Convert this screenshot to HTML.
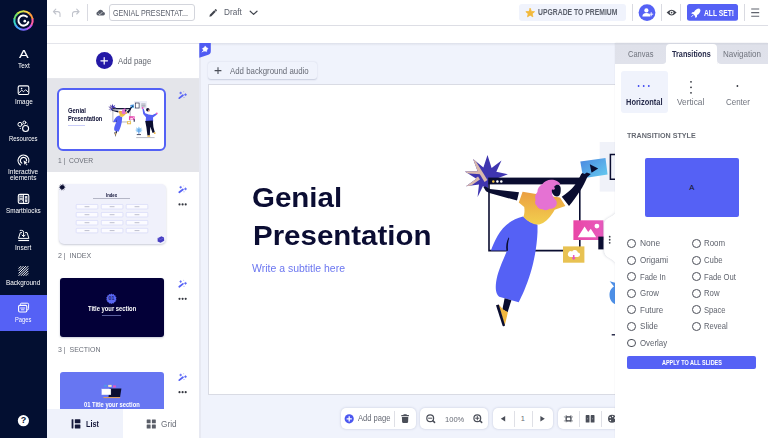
<!DOCTYPE html>
<html><head><meta charset="utf-8"><title>Genial Presentation</title>
<style>
*{box-sizing:border-box;margin:0;padding:0}
html,body{width:768px;height:438px;overflow:hidden;background:#fff;font-family:"Liberation Sans",sans-serif;color:#5a5f6b}
.abs,.t{position:absolute}
.t{white-space:pre;line-height:1}
svg{position:absolute;left:0;top:0;overflow:visible}
#side{position:absolute;left:0;top:0;width:47px;height:438px;background:#030f31}
#top{position:absolute;left:47px;top:0;width:721px;height:26px;background:#fff;border-bottom:1px solid #dddee5}
#pages{position:absolute;left:47px;top:44px;width:152.3px;height:394px;background:#fff;overflow:hidden}
#cv{position:absolute;left:199px;top:43px;width:569px;height:395px;background:#f0f3fc;overflow:hidden}
#rp{position:absolute;left:615.400px;top:43px;width:153px;height:395px;background:#fff;box-shadow:-0.5px 0 1.500px rgba(40,50,90,.16)}
.grp{position:absolute;top:408px;height:21px;background:#fff;border-radius:5px;box-shadow:0 0 2.5px rgba(60,70,120,.25)}
.rad{position:absolute;width:8.8px;height:8.8px;border:1.4px solid #4b4e58;border-radius:50%}
.vd{position:absolute;width:1px;background:#d9dae1}
</style></head><body>
<div id="top"></div>
<svg width="768" height="438" viewBox="0 0 768 438" fill="none" stroke-linecap="round" stroke-linejoin="round">
<path d="M53.6 11.6h4.2a2.2 2.2 0 0 1 2.2 2.2v2.6M55.8 9.2l-2.4 2.4 2.4 2.4" stroke="#c1c4cc" stroke-width="1.1"/>
<path d="M78.9 11.6h-4.2a2.2 2.2 0 0 0 -2.2 2.2v2.6M76.7 9.2l2.4 2.4-2.4 2.4" stroke="#c1c4cc" stroke-width="1.1"/>
<g transform="translate(100.4 12.8) scale(0.84) translate(-100.6 -12.4)"><path d="M97.6 15.6h6.2a2.1 2.1 0 0 0 0.3-4.2a3.4 3.4 0 0 0 -6.4-0.6a2.5 2.5 0 0 0 -0.1 4.8z" fill="#5a5f6b"/><path d="M98.6 13.4l1.4 1.3 2.6-2.8" stroke="#fff" stroke-width="0.8"/></g>
<g transform="translate(212.8 13) scale(0.84) translate(-213.4 -11.8)">
<path d="M209.3 16.2l0.6-2.4 5.2-5.2 1.8 1.8-5.2 5.2z" fill="#40444d"/><path d="M215.6 8.1l0.7-0.7a0.7 0.7 0 0 1 1 0l0.8 0.8a0.7 0.7 0 0 1 0 1l-0.7 0.7z" fill="#40444d"/>
</g>
<path d="M250.2 11.2l3.4 3.2 3.4-3.2" stroke="#40444d" stroke-width="1.2"/>
</svg>
<div class="vd" style="left:87px;top:4px;height:17px"></div>
<div class="abs" style="left:109px;top:4px;width:85.5px;height:16.6px;border:1px solid #d3d5dc;border-radius:3px"></div>
<span class="t" style="left:113.33px;top:8.62px;font-size:8.6px;font-weight:400;color:#5a5f6b;transform:scaleX(0.8317);transform-origin:0 0;">GENIAL PRESENTAT...</span>
<span class="t" style="left:224.42px;top:8.45px;font-size:8.8px;font-weight:400;color:#5a5f6b;transform:scaleX(0.9313);transform-origin:0 0;">Draft</span>
<div class="abs" style="left:519.4px;top:4px;width:106.8px;height:16.8px;background:#f0f3fc;border-radius:3px"></div>
<svg width="768" height="438" viewBox="0 0 768 438" fill="none" stroke-linecap="round" stroke-linejoin="round">
<polygon points="530.20,8.50 531.43,11.40 534.57,11.68 532.20,13.75 532.90,16.82 530.20,15.20 527.50,16.82 528.20,13.75 525.83,11.68 528.97,11.40" fill="#f2b93b" stroke="#f2b93b" stroke-width="0.8"/>
<circle cx="647" cy="12.6" r="8.4" fill="#5561f5"/>
<circle cx="646.4" cy="10.4" r="2.1" fill="#fff"/><path d="M642.4 16.6a4 3.6 0 0 1 8 0z" fill="#fff"/><path d="M651.2 12.6v3.2M649.6 14.2h3.2" stroke="#fff" stroke-width="0.9"/>
<path d="M666.6 12.6q5-5.6 10 0q-5 5.6-10 0z" fill="#40444d"/><circle cx="671.6" cy="12.6" r="1.9" fill="#fff"/><circle cx="671.6" cy="12.6" r="0.9" fill="#40444d"/>
<rect x="687" y="4" width="51" height="16.8" rx="2.5" fill="#5561f5"/>
<path d="M699.6 8.4c-2.2 0.1-4 1.4-5.2 3.4l-1.8 0.2-1 1.4 1.9 0.5 1.9 1.9 0.5 1.9 1.4-1 0.2-1.8c2-1.2 3.300-3 3.400-5.200z" fill="#fff" transform="translate(-0.4 0.2)"/><path d="M693 15.200l-1.300 1.300" stroke="#fff" stroke-width="0.9"/>
<path d="M751.2 9h8M751.2 12.600h8M751.2 16.200h8" stroke="#5f636d" stroke-width="1.150" stroke-linecap="butt"/>
</svg>
<span class="t" style="left:538.45px;top:8.96px;font-size:8.2px;font-weight:700;color:#5a5f6b;transform:scaleX(0.8334);transform-origin:0 0;">UPGRADE TO PREMIUM</span>
<span class="t" style="left:703.74px;top:8.79px;font-size:8.4px;font-weight:700;color:#fff;transform:scaleX(0.8023);transform-origin:0 0;">ALL SET!</span>
<div class="vd" style="left:632px;top:4px;height:17px"></div>
<div class="vd" style="left:661.1px;top:4px;height:17px"></div>
<div class="vd" style="left:680.4px;top:4px;height:17px"></div>
<div class="vd" style="left:743.7px;top:4px;height:17px"></div>
<div class="abs" style="left:47px;top:43px;width:721px;height:1px;background:#e4e5eb"></div>
<div id="cv"></div>
<div class="abs" style="left:200px;top:43px;width:568px;height:3px;background:linear-gradient(#dde0ea,#f0f3fc)"></div>
<div class="abs" style="left:199.300px;top:44px;width:1.400px;height:394px;background:#e7e9f2"></div>
<div class="abs" style="left:208px;top:84px;width:552px;height:310.5px;background:#fff;border:1px solid #d9dbe4"></div>
<div class="abs" style="left:208px;top:61.600px;width:109.400px;height:17.600px;background:#f0f3fc;border-radius:3px;box-shadow:0 0.5px 1.5px rgba(40,50,100,.20)"></div>
<svg width="768" height="438" viewBox="0 0 768 438" fill="none"><path d="M214.600 70.600h6.800M218 67.200v6.800" stroke="#4a4e58" stroke-width="1.100"/><path d="M199.300 43h11.500v8.200c0 2.200-1.200 3.300-3.200 3.900L199.300 57.700z" fill="#4f5bf3"/><path d="M205.200 45.900L206.400 47.600L208.100 48.400L206.900 49.900L206.600 51.800L205 51.100L203.500 51.600L203.400 50L202.300 48.600L203.900 47.800Z" fill="#fff" stroke="#fff" stroke-width="0.400" stroke-linejoin="round"/><path d="M203.400 50.700l-1.300 1.300" stroke="#fff" stroke-width="0.900" stroke-linecap="round"/></svg>
<span class="t" style="left:230.34px;top:67.19px;font-size:8.4px;font-weight:400;color:#666a75;transform:scaleX(0.9379);transform-origin:0 0;">Add background audio</span>
<span class="t" style="left:252.17px;top:183.97px;font-size:27.8px;font-weight:700;color:#0b0d33;transform:scaleX(1.0611);transform-origin:0 0;">Genial</span>
<span class="t" style="left:252.67px;top:222.27px;font-size:27.8px;font-weight:700;color:#0b0d33;transform:scaleX(1.0599);transform-origin:0 0;">Presentation</span>
<span class="t" style="left:252.31px;top:263.16px;font-size:10.8px;font-weight:400;color:#6b76f0;transform:scaleX(0.9704);transform-origin:0 0;">Write a subtitle here</span>
<svg width="768" height="438" viewBox="0 0 768 438" fill="none">
<defs><linearGradient id="gT" x1="0" y1="0" x2="0" y2="1"><stop offset="0" stop-color="#eb9f42"/><stop offset="1" stop-color="#f2cf4e"/></linearGradient><linearGradient id="gB" x1="0" y1="0" x2="1" y2="1"><stop offset="0" stop-color="#4a86e0"/><stop offset="1" stop-color="#66cdf0"/></linearGradient><linearGradient id="gP" x1="0" y1="0" x2="1" y2="0"><stop offset="0" stop-color="#e946a6"/><stop offset="1" stop-color="#e85abd"/></linearGradient><clipPath id="cStar"><path id="starp" d="M487.500 154.900L491.600 168L501.500 160.500L496.300 171.800L507.900 174.200L497 178.500L500 186L490 184.500L487 190L483 186L477.600 196.900L479 184.400L466 186.200L476.400 178.800L464.800 171.400L477.600 171.200L473.100 159L483.400 167.400Z"/></clipPath></defs>
<rect x="599.700" y="142" width="20" height="49.600" fill="#f0f2f9"/>
<path d="M616 154.600h-5.600v24.600h5.600" stroke="#0a0d30" stroke-width="1.500"/>
<path d="M487.500 154.900L491.600 168L501.500 160.500L496.300 171.800L507.900 174.200L497 178.500L500 186L490 184.500L487 190L483 186L477.600 196.900L479 184.400L466 186.200L476.400 178.800L464.800 171.400L477.600 171.200L473.100 159L483.400 167.400Z" fill="#3f35b0"/>
<g clip-path="url(#cStar)" stroke="#d9b8ac" stroke-width="3.400"><path d="M470 155L486 181"/><path d="M462 171.500L481 172.500"/><path d="M463 189L479 178"/></g>
<rect x="488.200" y="184" width="92" height="66.600" fill="#fff"/>
<rect x="488.200" y="177.600" width="93" height="6.800" fill="#0a0d30"/>
<path d="M489 184v66.600h75" stroke="#0a0d30" stroke-width="1.600"/><path d="M579.800 184v64" stroke="#0a0d30" stroke-width="1.600"/>
<circle cx="493.300" cy="181.500" r="1.250" fill="#f2c43d"/><circle cx="497.400" cy="181.500" r="1.250" fill="#fff"/><circle cx="501.300" cy="181.500" r="1.250" fill="#fff"/>
<path d="M580.300 161.500L605.500 158L607.600 174.600L583.200 178.200Z" fill="url(#gB)"/>
<path d="M589.800 164.300L598.200 168.500L591.500 172.700Z" fill="#0a0d30"/>
<path d="M523 216.500C512 219 503 226 497.500 236C494 242.500 492 247 491 250.600L507 250.600C505 256 500 266 497.300 276C495.500 283 495.200 290 496.800 293.500C497.800 296 499 296.800 500 297L518.700 302.200C522 296 526.500 286 530.500 273C534.500 260 537 245 537.500 232L537.500 224.500L530 222Z" fill="#5561f5"/>
<path d="M508.600 237.500C506.500 241.500 505.800 246 506.400 250.800L508 250.800C507.600 246 508 242 509.200 238Z" fill="#0a0d30"/>
<path d="M504.600 298.300L511.400 300.200L507.600 312.200L502.400 309.600Z" fill="#0a0d30"/>
<path d="M498.600 304.600L503.200 309.400L507.800 312.200C507 316.500 505.800 321.500 504.600 325.600Z" fill="#f0b73f"/>
<path d="M496 305.200L498.800 304.400L505 325.200C504.600 326.400 503.400 326.800 502.600 325.800Z" fill="#0a0d30"/>
<path d="M483.400 187L485.400 186.600L489.800 188.900L519 192.200L517 200.600L489.500 192.900L486 191.200Z" fill="#0a0d30"/>
<path d="M561.800 196.800C567 193.500 571.500 189.500 574.500 185.600C577.500 181.500 579.500 177.500 581.200 174L582.400 172.900L584.600 173.900L586.800 172.400L590.800 174.100L587.200 177.200C585.500 181.500 583 186.500 579.800 191.200C576.500 196 573 201.500 569 206Z" fill="#0a0d30"/>
<path d="M522.600 191.800L542 195L560 197.400L565.400 206L554.700 209.700C553.600 212 552.400 213.500 550.600 216C547.500 220 542.500 224.800 537 224.600C531 223.500 526 220 523.400 216.700C524.600 213.500 524.800 210.500 524.200 206.900L518.800 202.400Z" fill="url(#gT)"/>
<path d="M551 179.800C555 179.600 559 181.500 560.600 184.600C557 184 553 187 552 191C551.500 195 554 198.500 556.200 200.500C557.400 203 556.800 206 554.600 207.400C552.500 209 550.500 208.400 549.500 208.800C547.500 210.600 544.500 210.600 542.600 209.200C540 209.600 537.600 208 537 206C535 204.600 534.600 202 535.600 200C534.400 197 535.400 194 537.400 192C537.400 188.500 539.500 185.500 542.400 184C544.400 181.400 547.500 179.800 551 179.800Z" fill="#e572d3"/>
<path d="M554.400 186.400C555.800 184.400 558.600 184.200 560 186C561 187.600 560.800 190 560.600 192C560.400 194.600 559 196.600 556.800 196.600C554 196.400 551.800 193.500 551.800 190.800C551.800 189 552.800 187.400 554.400 186.400Z" fill="#0a0d30"/>
<circle cx="553.300" cy="188.200" r="1.500" fill="#e572d3"/>
<rect x="573.400" y="220.300" width="30" height="19.700" fill="url(#gP)"/>
<path d="M577.800 237.200L584.600 226.600L588.200 232L590.800 228.800L596.200 237.200Z" fill="#fff"/><circle cx="596.900" cy="226.100" r="2.400" fill="#fff"/>
<rect x="598.300" y="236.600" width="5.200" height="12.800" fill="#0a0d30"/>
<rect x="563" y="246.400" width="21.400" height="16.300" fill="#e8c252"/>
<path d="M569.800 257h7.800a2.300 2.300 0 0 0 0.300-4.600a3.200 3.200 0 0 0 -5.800-1a2.800 2.800 0 0 0 -2.300 5.600z" fill="#fff"/>
<path d="M573.700 255v3.400M572.400 257.400l1.300 1.500 1.300-1.500" stroke="#e957c0" stroke-width="1.500"/>
<path d="M609.700 281.200L616 283L616 304.500C611 303 609 298 609.600 293C610 290 612 287.500 614 286.500Z" fill="#4d8fe6"/>
<path d="M611.700 334.800h5" stroke="#0a0d30" stroke-width="1.300"/>
</svg>
<div class="grp" style="left:340.6px;width:75.2px"></div>
<div class="grp" style="left:420px;width:68.2px"></div>
<div class="grp" style="left:493px;width:60.4px"></div>
<div class="grp" style="left:557.7px;width:70px"></div>
<div class="vd" style="left:394px;top:410.500px;height:16px;background:#dfe0e6"></div>
<div class="vd" style="left:514.2px;top:410.500px;height:16px;background:#dfe0e6"></div>
<div class="vd" style="left:531.5px;top:410.500px;height:16px;background:#dfe0e6"></div>
<div class="vd" style="left:579.2px;top:410.500px;height:16px;background:#dfe0e6"></div>
<div class="vd" style="left:601px;top:410.500px;height:16px;background:#dfe0e6"></div>
<svg width="768" height="438" viewBox="0 0 768 438" fill="none" stroke-linecap="round" stroke-linejoin="round">
<circle cx="349.200" cy="418.800" r="4.600" fill="#4b57f0"/><path d="M346.600 418.800h5.200M349.200 416.200v5.200" stroke="#fff" stroke-width="1.300" stroke-linecap="butt"/>
<path d="M401.300 416.300h7.600v-1.200h-2.200v-0.800h-3.200v0.800h-2.200z" fill="#4a4e58"/><path d="M401.900 417.100h6.400l-0.200 5a0.900 0.900 0 0 1 -0.900 0.800h-4.200a0.900 0.900 0 0 1 -0.900-0.800z" fill="#4a4e58"/>
<circle cx="430.2" cy="418.200" r="3.400" stroke="#4a4e58" stroke-width="1.200"/><path d="M432.9 420.7l1.700 1.700" stroke="#4a4e58" stroke-width="1.500"/>
<path d="M428.5 418.200h3.400" stroke="#4a4e58" stroke-width="1"/>
<circle cx="477.3" cy="418.200" r="3.400" stroke="#4a4e58" stroke-width="1.200"/><path d="M480.0 420.7l1.700 1.700" stroke="#4a4e58" stroke-width="1.500"/>
<path d="M475.6 418.200h3.400" stroke="#4a4e58" stroke-width="1"/>
<path d="M477.3 416.500v3.400" stroke="#4a4e58" stroke-width="1"/>
<path d="M505.200 416v5.600l-4.400-2.800z" fill="#4a4e58"/><path d="M540.400 416v5.600l4.400-2.800z" fill="#4a4e58"/>
<path d="M563.900 416.900h9.300M563.900 420.900h9.300M566.200 415v7.800M570.900 415v7.800" stroke="#4a4e58" stroke-width="0.900" stroke-linecap="butt" stroke-dasharray="0.900 0.700" opacity="0.800"/><rect x="566.200" y="416.900" width="4.700" height="4" fill="none" stroke="#4a4e58" stroke-width="1.200"/>
<rect x="585.700" y="415.100" width="3.800" height="7.400" rx="0.600" fill="#4a4e58"/><rect x="590.700" y="415.100" width="3.800" height="7.400" rx="0.600" fill="#4a4e58"/><circle cx="587.600" cy="418.800" r="0.550" fill="#9fa2ab"/><circle cx="592.600" cy="418.800" r="0.550" fill="#9fa2ab"/>
<circle cx="612" cy="418.700" r="4" fill="#4a4e58"/><circle cx="610.200" cy="417.600" r="0.750" fill="#fff"/><circle cx="612.600" cy="416.400" r="0.750" fill="#fff"/><circle cx="610.400" cy="420.400" r="0.750" fill="#fff"/><circle cx="614.600" cy="418" r="0.750" fill="#fff"/>
</svg>
<span class="t" style="left:357.55px;top:415.36px;font-size:8.2px;font-weight:400;color:#666a75;transform:scaleX(0.9270);transform-origin:0 0;">Add page</span>
<span class="t" style="left:444.59px;top:415.54px;font-size:7.4px;font-weight:400;color:#666a75;transform:scaleX(1.0216);transform-origin:0 0;">100%</span>
<span class="t" style="left:520.74px;top:415.14px;font-size:7.4px;font-weight:400;color:#666a75;">1</span>
<svg width="768" height="438" viewBox="0 0 768 438" style="filter:drop-shadow(-0.5px 0 1px rgba(40,50,90,.16))"><path d="M616 210.500C616 217.500 604.400 216.500 604.400 224.500V251C604.400 259 616 258 616 265.500z" fill="#fff"/></svg>
<div id="rp"></div>
<svg width="768" height="438" viewBox="0 0 768 438"><path d="M616 210.500C616 217.500 604.400 216.500 604.400 224.500V251C604.400 259 616 258 616 265.500z" fill="#fff"/><circle cx="609.700" cy="236.700" r="0.900" fill="#42464f"/><circle cx="609.700" cy="239.750" r="0.900" fill="#42464f"/><circle cx="609.700" cy="242.800" r="0.900" fill="#42464f"/></svg>
<div class="abs" style="left:615.400px;top:43px;width:153px;height:21px;background:linear-gradient(#d2d5df 0,#dfe1ea 2.500px,#e0e2eb 100%)"></div>
<div class="abs" style="left:666.300px;top:43.500px;width:51px;height:21px;background:#fff;border-radius:4px 4px 0 0"></div>
<svg width="768" height="438" viewBox="0 0 768 438"><path d="M662.300 64h4v-4a4 4 0 0 1 -4 4zM721.300 64h-4v-4a4 4 0 0 0 4 4z" fill="#fff"/></svg>
<span class="t" style="left:628.44px;top:50.19px;font-size:8.4px;font-weight:400;color:#70747e;transform:scaleX(0.8985);transform-origin:0 0;">Canvas</span>
<span class="t" style="left:672.44px;top:50.09px;font-size:8.4px;font-weight:700;color:#262a4a;transform:scaleX(0.8666);transform-origin:0 0;">Transitions</span>
<span class="t" style="left:723.44px;top:50.09px;font-size:8.4px;font-weight:400;color:#70747e;transform:scaleX(0.9582);transform-origin:0 0;">Navigation</span>
<div class="abs" style="left:621.300px;top:70.600px;width:46.700px;height:42px;background:#f0f3fc;border-radius:3px"></div>
<svg width="768" height="438" viewBox="0 0 768 438"><circle cx="638.600" cy="86" r="0.900" fill="#3b47f0"/><circle cx="643.700" cy="86" r="0.900" fill="#3b47f0"/><circle cx="648.800" cy="86" r="0.900" fill="#3b47f0"/><circle cx="691" cy="81.800" r="0.900" fill="#33363f"/><circle cx="691" cy="87.300" r="0.900" fill="#33363f"/><circle cx="691" cy="92.800" r="0.900" fill="#33363f"/><circle cx="737.400" cy="86" r="0.900" fill="#33363f"/></svg>
<span class="t" style="left:626.24px;top:97.79px;font-size:8.4px;font-weight:700;color:#262a4a;transform:scaleX(0.8918);transform-origin:0 0;">Horizontal</span>
<span class="t" style="left:677.34px;top:97.79px;font-size:8.4px;font-weight:400;color:#70747e;transform:scaleX(0.9947);transform-origin:0 0;">Vertical</span>
<span class="t" style="left:725.54px;top:97.79px;font-size:8.4px;font-weight:400;color:#70747e;transform:scaleX(0.9516);transform-origin:0 0;">Center</span>
<span class="t" style="left:626.87px;top:132.00px;font-size:7.8px;font-weight:700;color:#666a73;transform:scaleX(0.9173);transform-origin:0 0;">TRANSITION STYLE</span>
<div class="abs" style="left:645px;top:158.200px;width:94px;height:58.800px;background:#5561f5;border-radius:2px"></div>
<span class="t" style="left:689.16px;top:184.17px;font-size:7.6px;font-weight:400;color:#111;">A</span>
<div class="rad" style="left:627.00px;top:239.20px"></div>
<span class="t" style="left:639.74px;top:239.49px;font-size:8.4px;font-weight:400;color:#5f636d;transform:scaleX(1.0046);transform-origin:0 0;">None</span>
<div class="rad" style="left:691.90px;top:239.20px"></div>
<span class="t" style="left:704.24px;top:239.49px;font-size:8.4px;font-weight:400;color:#5f636d;transform:scaleX(0.9454);transform-origin:0 0;">Room</span>
<div class="rad" style="left:627.00px;top:255.75px"></div>
<span class="t" style="left:639.74px;top:256.04px;font-size:8.4px;font-weight:400;color:#5f636d;transform:scaleX(0.9589);transform-origin:0 0;">Origami</span>
<div class="rad" style="left:691.90px;top:255.75px"></div>
<span class="t" style="left:704.24px;top:256.04px;font-size:8.4px;font-weight:400;color:#5f636d;transform:scaleX(0.9248);transform-origin:0 0;">Cube</span>
<div class="rad" style="left:627.00px;top:272.30px"></div>
<span class="t" style="left:639.74px;top:272.59px;font-size:8.4px;font-weight:400;color:#5f636d;transform:scaleX(0.9056);transform-origin:0 0;">Fade In</span>
<div class="rad" style="left:691.90px;top:272.30px"></div>
<span class="t" style="left:704.24px;top:272.59px;font-size:8.4px;font-weight:400;color:#5f636d;transform:scaleX(0.9142);transform-origin:0 0;">Fade Out</span>
<div class="rad" style="left:627.00px;top:288.85px"></div>
<span class="t" style="left:639.74px;top:289.14px;font-size:8.4px;font-weight:400;color:#5f636d;transform:scaleX(0.9405);transform-origin:0 0;">Grow</span>
<div class="rad" style="left:691.90px;top:288.85px"></div>
<span class="t" style="left:704.24px;top:289.14px;font-size:8.4px;font-weight:400;color:#5f636d;transform:scaleX(0.9259);transform-origin:0 0;">Row</span>
<div class="rad" style="left:627.00px;top:305.40px"></div>
<span class="t" style="left:639.74px;top:305.69px;font-size:8.4px;font-weight:400;color:#5f636d;transform:scaleX(0.9548);transform-origin:0 0;">Future</span>
<div class="rad" style="left:691.90px;top:305.40px"></div>
<span class="t" style="left:704.24px;top:305.69px;font-size:8.4px;font-weight:400;color:#5f636d;transform:scaleX(0.9063);transform-origin:0 0;">Space</span>
<div class="rad" style="left:627.00px;top:321.95px"></div>
<span class="t" style="left:639.74px;top:322.24px;font-size:8.4px;font-weight:400;color:#5f636d;transform:scaleX(0.9624);transform-origin:0 0;">Slide</span>
<div class="rad" style="left:691.90px;top:321.95px"></div>
<span class="t" style="left:704.24px;top:322.24px;font-size:8.4px;font-weight:400;color:#5f636d;transform:scaleX(0.9097);transform-origin:0 0;">Reveal</span>
<div class="rad" style="left:627.00px;top:338.50px"></div>
<span class="t" style="left:639.74px;top:338.79px;font-size:8.4px;font-weight:400;color:#5f636d;transform:scaleX(0.9399);transform-origin:0 0;">Overlay</span>
<div class="abs" style="left:627.300px;top:356.200px;width:129.100px;height:12.800px;background:#5561f5;border-radius:2px"></div>
<span class="t" style="left:661.84px;top:359.70px;font-size:6.5px;font-weight:700;color:#fff;transform:scaleX(0.8433);transform-origin:0 0;">APPLY TO ALL SLIDES</span>
<div id="pages"></div>
<div class="abs" style="left:47px;top:78px;width:152.3px;height:1px;background:#e6e7ec"></div>
<div class="abs" style="left:47px;top:79px;width:152.3px;height:93.2px;background:#e4e5ea"></div>
<div class="abs" style="left:95.6px;top:52.2px;width:17.2px;height:17.2px;border-radius:50%;background:#2419a6"></div>
<svg width="768" height="438" viewBox="0 0 768 438" fill="none"><path d="M100.9 60.8h6.600M104.200 57.500v6.600" stroke="#fff" stroke-width="1.2" stroke-linecap="round"/></svg>
<span class="t" style="left:117.74px;top:57.09px;font-size:8.4px;font-weight:400;color:#62666f;transform:scaleX(0.9261);transform-origin:0 0;">Add page</span>
<div class="abs" style="left:57.1px;top:88.1px;width:109.4px;height:62.5px;background:#fff;border:2px solid #5361f5;border-radius:6px"></div>
<div class="abs" style="left:58.6px;top:183.6px;width:107.2px;height:60px;background:#f0f1fb;border-radius:5px;box-shadow:0 1px 2px rgba(40,50,100,.25)"></div>
<div class="abs" style="left:59.6px;top:278px;width:104.6px;height:59px;background:#030038;border-radius:3px;box-shadow:0 1px 2px rgba(40,50,100,.25)"></div>
<div class="abs" style="left:59.6px;top:372.300px;width:104.6px;height:59px;background:#6776f2;border-radius:3px"></div>
<span class="t" style="left:58.48px;top:157.48px;font-size:7.7px;font-weight:400;color:#6a6e78;transform:scaleX(0.8755);transform-origin:0 0;">1 |  COVER</span>
<span class="t" style="left:58.48px;top:251.88px;font-size:7.7px;font-weight:400;color:#6a6e78;transform:scaleX(0.9160);transform-origin:0 0;">2 |  INDEX</span>
<span class="t" style="left:58.48px;top:346.28px;font-size:7.7px;font-weight:400;color:#6a6e78;transform:scaleX(0.9058);transform-origin:0 0;">3 |  SECTION</span>
<svg width="768" height="438" viewBox="0 0 768 438" fill="none">
<g transform="translate(19.665 74.194) scale(0.1906)"><path d="M487.500 154.900L491.600 168L501.500 160.500L496.300 171.800L507.900 174.200L497 178.500L500 186L490 184.500L487 190L483 186L477.600 196.900L479 184.400L466 186.200L476.400 178.800L464.800 171.400L477.600 171.200L473.100 159L483.400 167.400Z" fill="#3f35b0"/>
<g clip-path="url(#cStar)" stroke="#d9b8ac" stroke-width="3.400"><path d="M470 155L486 181"/><path d="M462 171.500L481 172.500"/><path d="M463 189L479 178"/></g>
<rect x="488.200" y="184" width="92" height="66.600" fill="#fff"/>
<rect x="488.200" y="177.600" width="93" height="6.800" fill="#0a0d30"/>
<path d="M489 184v66.600h75" stroke="#0a0d30" stroke-width="1.600"/><path d="M579.800 184v64" stroke="#0a0d30" stroke-width="1.600"/>
<circle cx="493.300" cy="181.500" r="1.250" fill="#f2c43d"/><circle cx="497.400" cy="181.500" r="1.250" fill="#fff"/><circle cx="501.300" cy="181.500" r="1.250" fill="#fff"/>
<path d="M580.300 161.500L605.500 158L607.600 174.600L583.200 178.200Z" fill="url(#gB)"/>
<path d="M589.800 164.300L598.200 168.500L591.500 172.700Z" fill="#0a0d30"/>
<path d="M523 216.500C512 219 503 226 497.500 236C494 242.500 492 247 491 250.600L507 250.600C505 256 500 266 497.300 276C495.500 283 495.200 290 496.800 293.500C497.800 296 499 296.800 500 297L518.700 302.200C522 296 526.500 286 530.500 273C534.500 260 537 245 537.500 232L537.500 224.500L530 222Z" fill="#5561f5"/>
<path d="M508.600 237.500C506.500 241.500 505.800 246 506.400 250.800L508 250.800C507.600 246 508 242 509.200 238Z" fill="#0a0d30"/>
<path d="M504.600 298.300L511.400 300.200L507.600 312.200L502.400 309.600Z" fill="#0a0d30"/>
<path d="M498.600 304.600L503.200 309.400L507.800 312.200C507 316.500 505.800 321.500 504.600 325.600Z" fill="#f0b73f"/>
<path d="M496 305.200L498.800 304.400L505 325.200C504.600 326.400 503.400 326.800 502.600 325.800Z" fill="#0a0d30"/>
<path d="M483.400 187L485.400 186.600L489.800 188.900L519 192.200L517 200.600L489.500 192.900L486 191.200Z" fill="#0a0d30"/>
<path d="M561.800 196.800C567 193.500 571.500 189.500 574.500 185.600C577.500 181.500 579.500 177.500 581.200 174L582.400 172.900L584.600 173.900L586.800 172.400L590.800 174.100L587.200 177.200C585.500 181.500 583 186.500 579.800 191.200C576.500 196 573 201.500 569 206Z" fill="#0a0d30"/>
<path d="M522.600 191.800L542 195L560 197.400L565.400 206L554.700 209.700C553.600 212 552.400 213.500 550.600 216C547.500 220 542.500 224.800 537 224.600C531 223.500 526 220 523.400 216.700C524.600 213.500 524.800 210.500 524.200 206.900L518.800 202.400Z" fill="url(#gT)"/>
<path d="M551 179.800C555 179.600 559 181.500 560.600 184.600C557 184 553 187 552 191C551.500 195 554 198.500 556.200 200.500C557.400 203 556.800 206 554.600 207.400C552.500 209 550.500 208.400 549.500 208.800C547.500 210.600 544.500 210.600 542.600 209.200C540 209.600 537.600 208 537 206C535 204.600 534.600 202 535.600 200C534.400 197 535.400 194 537.400 192C537.400 188.500 539.500 185.500 542.400 184C544.400 181.400 547.500 179.800 551 179.800Z" fill="#e572d3"/>
<path d="M554.400 186.400C555.800 184.400 558.600 184.200 560 186C561 187.600 560.800 190 560.600 192C560.400 194.600 559 196.600 556.800 196.600C554 196.400 551.800 193.500 551.800 190.800C551.800 189 552.800 187.400 554.400 186.400Z" fill="#0a0d30"/>
<circle cx="553.300" cy="188.200" r="1.500" fill="#e572d3"/>
<rect x="573.400" y="220.300" width="30" height="19.700" fill="url(#gP)"/>
<path d="M577.800 237.200L584.600 226.600L588.200 232L590.800 228.800L596.200 237.200Z" fill="#fff"/><circle cx="596.900" cy="226.100" r="2.400" fill="#fff"/>
<rect x="598.300" y="236.600" width="5.200" height="12.800" fill="#0a0d30"/>
<rect x="563" y="246.400" width="21.400" height="16.300" fill="#e8c252"/>
<path d="M569.800 257h7.800a2.300 2.300 0 0 0 0.300-4.600a3.200 3.200 0 0 0 -5.800-1a2.800 2.800 0 0 0 -2.300 5.600z" fill="#fff"/>
<path d="M573.700 255v3.400M572.400 257.400l1.300 1.500 1.300-1.500" stroke="#e957c0" stroke-width="1.500"/></g>
<rect x="134" y="101" width="12.900" height="8" fill="#eceef8"/>
<rect x="135.500" y="103" width="3.600" height="5" fill="#fff" stroke="#1b1e3c" stroke-width="0.600"/>
<path d="M141.300 104h4.300M141.300 105.400h4.300M141.300 106.800h4.300" stroke="#8a8d9c" stroke-width="0.700"/>
<path d="M142.400 108.600l1.400 0.400 1.400 4.200 3.400 1.200 3.800 0.600 3.800-1.800 0.800 1.400-4 2.800 0.200 4-7.600 0.400 0.400-4.600-2.800-3.200z" fill="#5561f5"/>
<path d="M145.200 121l7.600-0.400 0.600 6.500 1.400 5.200-2.200 0.700-2.300-6.200-0.500 8.600-2.400 0.100-1-8.300z" fill="#0a0d30"/>
<circle cx="147.800" cy="109.800" r="1.700" fill="#0a0d30"/><circle cx="149" cy="110.400" r="1" fill="#e79a86"/>
<circle cx="142.600" cy="108" r="0.900" fill="#e957c0"/><circle cx="156.800" cy="113.400" r="0.900" fill="#e957c0"/>
<path d="M153.600 132.600l1.600-0.600 0.500 1.700-1.500 0.400zM147.600 135.600h2.600v1.100h-3z" fill="#f0b73f"/>
<path d="M136.200 137.600h18.400" stroke="#8a8d9c" stroke-width="0.600"/>
<path d="M138.900 126l1.300 2.300 2-1.300-0.700 2.400 2 0.600-2 1 0.400 2-2-1-1 1.700-1-1.700-2 1 0.400-2-2-1 2-0.600-0.700-2.400 2 1.300z" fill="#8cc6f3" transform="translate(138.900 129.500) scale(0.850) translate(-138.900 -129.500)"/>
<path d="M138.900 129v5" stroke="#3f7fd8" stroke-width="0.700"/><path d="M136.800 134.600h4.200" stroke="#1b1e3c" stroke-width="0.800"/>
<polygon points="62.20,183.50 62.68,185.57 64.20,184.09 63.48,186.09 65.57,185.66 63.88,186.96 65.86,187.73 63.75,187.91 65.00,189.62 63.12,188.63 63.24,190.75 62.20,188.90 61.16,190.75 61.28,188.63 59.40,189.62 60.65,187.91 58.54,187.73 60.52,186.96 58.83,185.66 60.92,186.09 60.20,184.09 61.72,185.57" fill="#0a0d30"/>
<rect x="76.20" y="204.45" width="21.600" height="4.500" rx="0.600" fill="#fbfbff" stroke="#c9ccf6" stroke-width="0.500"/>
<path d="M84.60 206.7h4.800" stroke="#8a8ca3" stroke-width="0.550"/>
<rect x="76.20" y="212.45" width="21.600" height="4.500" rx="0.600" fill="#fbfbff" stroke="#c9ccf6" stroke-width="0.500"/>
<path d="M84.60 214.7h4.800" stroke="#8a8ca3" stroke-width="0.550"/>
<rect x="76.20" y="220.45" width="21.600" height="4.500" rx="0.600" fill="#fbfbff" stroke="#c9ccf6" stroke-width="0.500"/>
<path d="M84.60 222.7h4.800" stroke="#8a8ca3" stroke-width="0.550"/>
<rect x="76.20" y="228.35" width="21.600" height="4.500" rx="0.600" fill="#fbfbff" stroke="#c9ccf6" stroke-width="0.500"/>
<path d="M84.60 230.6h4.800" stroke="#8a8ca3" stroke-width="0.550"/>
<rect x="101.30" y="204.45" width="21.600" height="4.500" rx="0.600" fill="#fbfbff" stroke="#c9ccf6" stroke-width="0.500"/>
<path d="M109.70 206.7h4.800" stroke="#8a8ca3" stroke-width="0.550"/>
<rect x="101.30" y="212.45" width="21.600" height="4.500" rx="0.600" fill="#fbfbff" stroke="#c9ccf6" stroke-width="0.500"/>
<path d="M109.70 214.7h4.800" stroke="#8a8ca3" stroke-width="0.550"/>
<rect x="101.30" y="220.45" width="21.600" height="4.500" rx="0.600" fill="#fbfbff" stroke="#c9ccf6" stroke-width="0.500"/>
<path d="M109.70 222.7h4.800" stroke="#8a8ca3" stroke-width="0.550"/>
<rect x="101.30" y="228.35" width="21.600" height="4.500" rx="0.600" fill="#fbfbff" stroke="#c9ccf6" stroke-width="0.500"/>
<path d="M109.70 230.6h4.800" stroke="#8a8ca3" stroke-width="0.550"/>
<rect x="126.20" y="204.45" width="21.600" height="4.500" rx="0.600" fill="#fbfbff" stroke="#c9ccf6" stroke-width="0.500"/>
<path d="M134.60 206.7h4.800" stroke="#8a8ca3" stroke-width="0.550"/>
<rect x="126.20" y="212.45" width="21.600" height="4.500" rx="0.600" fill="#fbfbff" stroke="#c9ccf6" stroke-width="0.500"/>
<path d="M134.60 214.7h4.800" stroke="#8a8ca3" stroke-width="0.550"/>
<rect x="126.20" y="220.45" width="21.600" height="4.500" rx="0.600" fill="#fbfbff" stroke="#c9ccf6" stroke-width="0.500"/>
<path d="M134.60 222.7h4.800" stroke="#8a8ca3" stroke-width="0.550"/>
<rect x="126.20" y="228.35" width="21.600" height="4.500" rx="0.600" fill="#fbfbff" stroke="#c9ccf6" stroke-width="0.500"/>
<path d="M134.60 230.6h4.800" stroke="#8a8ca3" stroke-width="0.550"/>
<path d="M157.600 238.200l3.800-2 2.600 1.200 0.200 3.400-3.600 2-3-1.400z" fill="#453cc0"/><path d="M157.600 238.200l3 1.300 3.400-1.900" stroke="#7f78e6" stroke-width="0.500" fill="none"/>
<polygon points="111.40,293.50 112.40,294.41 113.70,294.02 114.21,295.28 115.54,295.50 115.45,296.85 116.57,297.62 115.90,298.80 116.57,299.98 115.45,300.75 115.54,302.10 114.21,302.32 113.70,303.58 112.40,303.19 111.40,304.10 110.40,303.19 109.10,303.58 108.59,302.32 107.26,302.10 107.35,300.75 106.23,299.98 106.90,298.80 106.23,297.62 107.35,296.85 107.26,295.50 108.59,295.28 109.10,294.02 110.40,294.41" fill="#5b67f2"/>
<path d="M109.600 388.400h11.800l-1.300 8.600h-11.600z" fill="#0a0d30"/>
<rect x="101.800" y="389" width="9.100" height="5.800" fill="#fff"/><rect x="101.800" y="389" width="9.100" height="5.800" fill="none" stroke="#dfe1ee" stroke-width="0.300"/>
<path d="M103.400 397.600h16.800" stroke="#f0a53f" stroke-width="0.900"/>
<rect x="104.100" y="384.800" width="2.800" height="1.900" fill="#4d9be8"/><rect x="108.200" y="384.900" width="3.400" height="2" fill="#f4e7b8"/><rect x="113" y="385.400" width="2.900" height="2.100" fill="#e957c0"/>
</svg>
<span class="t" style="left:67.85px;top:107.78px;font-size:6.4px;font-weight:700;color:#0b0d33;transform:scaleX(0.9160);transform-origin:0 0;">Genial</span>
<span class="t" style="left:67.85px;top:115.58px;font-size:6.4px;font-weight:700;color:#0b0d33;transform:scaleX(0.8860);transform-origin:0 0;">Presentation</span>
<div class="abs" style="left:68.2px;top:124.600px;width:17px;height:0.8px;background:#c9ccf8"></div>
<span class="t" style="left:105.81px;top:192.50px;font-size:5.2px;font-weight:700;color:#0b0d33;transform:scaleX(0.8090);transform-origin:0 0;">Index</span>
<div class="abs" style="left:93.2px;top:198.400px;width:36.600px;height:0.6px;background:#b4b6c6"></div>
<span class="t" style="left:108.40px;top:296.13px;font-size:5.4px;font-weight:700;color:#1a1f6e;">01</span>
<span class="t" style="left:87.50px;top:306.18px;font-size:6.4px;font-weight:700;color:#fff;transform:scaleX(0.9130);transform-origin:0 0;">Title your section</span>
<div class="abs" style="left:102.2px;top:314.800px;width:18.600px;height:0.6px;background:#5a5f9e"></div>
<span class="t" style="left:83.75px;top:402.18px;font-size:6.4px;font-weight:700;color:#fff;transform:scaleX(0.9030);transform-origin:0 0;">01 Title your section</span>
<svg width="768" height="438" viewBox="0 0 768 438" fill="none">
<g transform="translate(182.6 95.2)"><path d="M-3.300 2.900L0.300 0.100" stroke="#5561f5" stroke-width="1.800" stroke-linecap="round"/><path d="M-1.900 -3.500l0.450 0.850 0.850 0.450-0.850 0.450-0.450 0.850-0.450-0.850-0.850-0.450 0.850-0.450z" fill="#5561f5" stroke="#5561f5" stroke-width="0.300"/><path d="M2.900 -1.900l0.500 0.900 0.900 0.500-0.900 0.500-0.500 0.900-0.500-0.900-0.900-0.500 0.900-0.500z" fill="#5561f5" stroke="#5561f5" stroke-width="0.300"/><circle cx="1.150" cy="-3.500" r="0.450" fill="#5561f5" opacity="0.700"/><circle cx="1.400" cy="2.400" r="0.500" fill="#5561f5" opacity="0.700"/></g>
<g transform="translate(182.6 189.4)"><path d="M-3.300 2.900L0.300 0.100" stroke="#5561f5" stroke-width="1.800" stroke-linecap="round"/><path d="M-1.900 -3.500l0.450 0.850 0.850 0.450-0.850 0.450-0.450 0.850-0.450-0.850-0.850-0.450 0.850-0.450z" fill="#5561f5" stroke="#5561f5" stroke-width="0.300"/><path d="M2.900 -1.900l0.500 0.900 0.900 0.500-0.900 0.500-0.500 0.900-0.500-0.900-0.900-0.500 0.900-0.500z" fill="#5561f5" stroke="#5561f5" stroke-width="0.300"/><circle cx="1.150" cy="-3.500" r="0.450" fill="#5561f5" opacity="0.700"/><circle cx="1.400" cy="2.400" r="0.500" fill="#5561f5" opacity="0.700"/></g>
<circle cx="179.5" cy="204.4" r="1.080" fill="#33363f"/><circle cx="182.6" cy="204.4" r="1.080" fill="#33363f"/><circle cx="185.7" cy="204.4" r="1.080" fill="#33363f"/>
<g transform="translate(182.6 283.8)"><path d="M-3.300 2.900L0.300 0.100" stroke="#5561f5" stroke-width="1.800" stroke-linecap="round"/><path d="M-1.900 -3.500l0.450 0.850 0.850 0.450-0.850 0.450-0.450 0.850-0.450-0.850-0.850-0.450 0.850-0.450z" fill="#5561f5" stroke="#5561f5" stroke-width="0.300"/><path d="M2.900 -1.900l0.500 0.900 0.900 0.500-0.900 0.500-0.500 0.900-0.500-0.900-0.900-0.500 0.900-0.500z" fill="#5561f5" stroke="#5561f5" stroke-width="0.300"/><circle cx="1.150" cy="-3.500" r="0.450" fill="#5561f5" opacity="0.700"/><circle cx="1.400" cy="2.400" r="0.500" fill="#5561f5" opacity="0.700"/></g>
<circle cx="179.5" cy="298.8" r="1.080" fill="#33363f"/><circle cx="182.6" cy="298.8" r="1.080" fill="#33363f"/><circle cx="185.7" cy="298.8" r="1.080" fill="#33363f"/>
<g transform="translate(182.6 377.2)"><path d="M-3.300 2.900L0.300 0.100" stroke="#5561f5" stroke-width="1.800" stroke-linecap="round"/><path d="M-1.900 -3.500l0.450 0.850 0.850 0.450-0.850 0.450-0.450 0.850-0.450-0.850-0.850-0.450 0.850-0.450z" fill="#5561f5" stroke="#5561f5" stroke-width="0.300"/><path d="M2.900 -1.900l0.500 0.900 0.900 0.500-0.900 0.500-0.500 0.900-0.500-0.900-0.900-0.500 0.900-0.500z" fill="#5561f5" stroke="#5561f5" stroke-width="0.300"/><circle cx="1.150" cy="-3.500" r="0.450" fill="#5561f5" opacity="0.700"/><circle cx="1.400" cy="2.400" r="0.500" fill="#5561f5" opacity="0.700"/></g>
<circle cx="179.5" cy="392.2" r="1.080" fill="#33363f"/><circle cx="182.6" cy="392.2" r="1.080" fill="#33363f"/><circle cx="185.7" cy="392.2" r="1.080" fill="#33363f"/>
</svg>
<div class="abs" style="left:47px;top:409px;width:152.3px;height:29px;background:#fff"></div>
<div class="abs" style="left:47px;top:409px;width:76px;height:29px;background:#eff2fb"></div>
<svg width="768" height="438" viewBox="0 0 768 438"><g fill="#15183a"><rect x="71.600" y="419.200" width="1.800" height="9.200" rx="0.400"/><rect x="74.800" y="419.200" width="5.600" height="4" rx="0.500"/><rect x="74.800" y="424.400" width="5.600" height="4" rx="0.500"/></g><g fill="#5a5e68"><rect x="146.700" y="419.400" width="3.900" height="3.900" rx="0.500"/><rect x="151.900" y="419.400" width="3.900" height="3.900" rx="0.500"/><rect x="146.700" y="424.600" width="3.900" height="3.900" rx="0.500"/><rect x="151.900" y="424.600" width="3.900" height="3.900" rx="0.500"/></g></svg>
<span class="t" style="left:85.83px;top:419.72px;font-size:8.6px;font-weight:700;color:#15183a;transform:scaleX(0.8472);transform-origin:0 0;">List</span>
<span class="t" style="left:160.53px;top:419.72px;font-size:8.6px;font-weight:400;color:#6a6e78;transform:scaleX(0.9567);transform-origin:0 0;">Grid</span>
<div id="side"></div>
<div class="abs" style="left:0;top:295px;width:47px;height:36px;background:#5561f5"></div>
<svg width="768" height="438" viewBox="0 0 768 438" fill="none" stroke="#fff" stroke-width="1" stroke-linecap="round" stroke-linejoin="round">
<path d="M23.32 11.30A9.2 9.2 0 0 1 29.55 13.57" stroke="#ffd84a" stroke-width="2.1" stroke-linecap="butt"/>
<path d="M29.27 13.34A9.2 9.2 0 0 1 32.59 19.08" stroke="#ff9a3c" stroke-width="2.1" stroke-linecap="butt"/>
<path d="M32.53 18.72A9.2 9.2 0 0 1 31.37 25.26" stroke="#ff5fa2" stroke-width="2.1" stroke-linecap="butt"/>
<path d="M31.56 24.94A9.2 9.2 0 0 1 26.47 29.21" stroke="#c95cf0" stroke-width="2.1" stroke-linecap="butt"/>
<path d="M26.82 29.08A9.2 9.2 0 0 1 20.18 29.08" stroke="#7a6bff" stroke-width="2.1" stroke-linecap="butt"/>
<path d="M20.53 29.21A9.2 9.2 0 0 1 15.44 24.94" stroke="#4aa8ff" stroke-width="2.1" stroke-linecap="butt"/>
<path d="M15.63 25.26A9.2 9.2 0 0 1 14.47 18.72" stroke="#39d6c8" stroke-width="2.1" stroke-linecap="butt"/>
<path d="M14.41 19.08A9.2 9.2 0 0 1 17.73 13.34" stroke="#6fe06a" stroke-width="2.1" stroke-linecap="butt"/>
<path d="M17.45 13.57A9.2 9.2 0 0 1 23.68 11.30" stroke="#c8ea4a" stroke-width="2.1" stroke-linecap="butt"/>
<path d="M26.91 16.71A5.1 5.1 0 1 0 28.35 22.08" stroke="#fff" stroke-width="2"/>
<circle cx="24.8" cy="21.2" r="1.35" fill="#fff" stroke="none"/>
<rect x="18.2" y="85.9" width="10.6" height="8.6" rx="1.4" stroke-width="1.1"/>
<path d="M19.2 92.6l2.6-2.4 1.8 1.5 2-2 2.2 2" stroke-width="0.9"/><circle cx="21.6" cy="88.6" r="0.8" fill="#fff" stroke="none"/>
<circle cx="20" cy="124.400" r="2.050" stroke-width="1"/><circle cx="24.400" cy="122.500" r="1.450" stroke-width="0.950"/><circle cx="25.600" cy="128.500" r="3" stroke-width="1.150"/>
<circle cx="20.300" cy="128.400" r="0.550" fill="#fff" stroke="none"/><circle cx="27.700" cy="124" r="0.450" fill="#fff" stroke="none"/>
<path d="M20.400 164.900A5.400 5.400 0 1 1 28.600 162.300" stroke-width="1.200"/>
<path d="M21.800 163.100A3.100 3.100 0 1 1 26.550 161" stroke-width="1.100"/>
<path d="M23.500 160.300l0.750 4.700 1.100-1.350 1.350 1.800 0.800-0.600-1.350-1.800 1.700-0.400z" fill="#fff" stroke="#030f31" stroke-width="0.300"/>
<rect x="18.300" y="194.400" width="10.500" height="9" rx="1.500" stroke-width="1.100"/><path d="M23.500 194.600v8.600" stroke-width="0.900"/>
<rect x="19.300" y="195.500" width="3.600" height="6.800" fill="#fff" fill-opacity="0.780" stroke="none"/>
<path d="M20 197.300h2.200M19.700 201.600l1.400-1.700 1.500 1.700z" stroke="#030f31" stroke-width="0.700" fill="#030f31"/>
<rect x="24.900" y="196.100" width="2.500" height="5.800" rx="0.400" fill="#fff" fill-opacity="0.850" stroke="none"/><path d="M25.600 199h1.100" stroke="#030f31" stroke-width="0.600"/>
<path d="M21.700 232.600H20.300L18.500 238.400H28.900L27.100 232.600H25.500" stroke-width="1"/>
<path d="M18.300 240.500H29.100" stroke-width="1.150" stroke-linecap="butt"/>
<path d="M20.200 230.400H21.700a1.900 1.900 0 0 1 1.900 1.900V236.400M22 235l1.600 1.600 1.600-1.600" stroke-width="1"/>
<path d="M18.60 266.20L18.70 266.10M18.60 268.60L21.10 266.10M18.60 271.00L23.50 266.10M18.60 273.40L25.90 266.10M18.60 275.80L28.30 266.10M21.00 275.80L28.30 268.50M23.40 275.80L28.30 270.90M25.80 275.80L28.30 273.30M28.20 275.80L28.30 275.70" stroke-width="0.950" stroke-linecap="butt"/>
<rect x="18.6" y="305.4" width="8.2" height="6.6" rx="1.2" stroke-width="1.1" fill="#5561f5"/>
<path d="M20.4 304.9v-0.6a1.1 1.1 0 0 1 1.1-1.1h6a1.1 1.1 0 0 1 1.1 1.1v4.4a1.1 1.1 0 0 1 -1.1 1.1h-0.6" stroke-width="1"/>
<path d="M20.6 308h4.2M21.4 309.8h2.6" stroke-width="0.9"/>
<circle cx="23.4" cy="420.7" r="5.6" fill="#fff" stroke="none"/>
</svg>
<span class="t" style="left:20.65px;top:416.28px;font-size:9px;font-weight:700;color:#030f31;">?</span>
<span class="t" style="left:18.76px;top:48.18px;font-size:11.6px;font-weight:400;color:#fff;transform:scaleX(1.2510);transform-origin:0 0;">A</span>
<span class="t" style="left:17.65px;top:62.58px;font-size:6.4px;font-weight:400;color:#fff;transform:scaleX(1.0059);transform-origin:0 0;">Text</span>
<span class="t" style="left:14.55px;top:98.58px;font-size:6.4px;font-weight:400;color:#fff;transform:scaleX(1.0022);transform-origin:0 0;">Image</span>
<span class="t" style="left:9.05px;top:135.68px;font-size:6.4px;font-weight:400;color:#fff;transform:scaleX(0.9331);transform-origin:0 0;">Resources</span>
<span class="t" style="left:8.25px;top:168.58px;font-size:6.4px;font-weight:400;color:#fff;transform:scaleX(1.0210);transform-origin:0 0;">Interactive</span>
<span class="t" style="left:10.25px;top:174.78px;font-size:6.4px;font-weight:400;color:#fff;transform:scaleX(1.0180);transform-origin:0 0;">elements</span>
<span class="t" style="left:6.05px;top:207.98px;font-size:6.4px;font-weight:400;color:#fff;transform:scaleX(0.9867);transform-origin:0 0;">Smartblocks</span>
<span class="t" style="left:15.30px;top:244.98px;font-size:6.4px;font-weight:400;color:#fff;transform:scaleX(1.0137);transform-origin:0 0;">Insert</span>
<span class="t" style="left:6.30px;top:280.48px;font-size:6.4px;font-weight:400;color:#fff;transform:scaleX(1.0028);transform-origin:0 0;">Background</span>
<span class="t" style="left:15.45px;top:316.78px;font-size:6.4px;font-weight:400;color:#fff;transform:scaleX(0.8995);transform-origin:0 0;">Pages</span>
</body></html>
